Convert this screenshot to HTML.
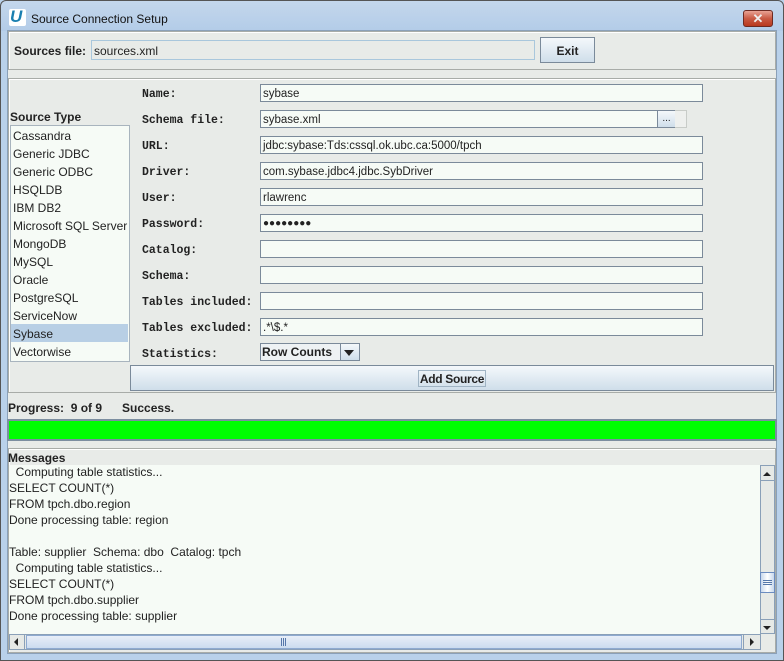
<!DOCTYPE html>
<html><head><style>
*{box-sizing:border-box;margin:0;padding:0}
body{width:784px;height:661px;overflow:hidden;background:#b9d1ea;font-family:"Liberation Sans",sans-serif;font-size:12px;color:#222;position:relative}
.a{position:absolute}
.win{left:0;top:0;width:784px;height:661px;border:1px solid #555;border-radius:6px 6px 0 0;background:linear-gradient(#c4d7ec,#b3cce8 30px,#b9d1ea 30px)}
.content{left:7px;top:30px;width:770px;height:624px;background:#e8ebe8;border:1px solid #8aa0b8}
.box{border:1px solid #a8aca8;box-shadow:inset 1px 1px 0 #fff}
.tf{background:#f6fbf6;border:1px solid #7b8a9a;height:18px;font-size:11.5px;padding-left:2px;padding-top:1px;line-height:16px;white-space:nowrap;overflow:hidden}
.lbl{font-family:"Liberation Mono",monospace;font-weight:bold;font-size:11.5px;left:142px}
.li{left:13px;font-size:12px}
.btn{border:1px solid #7a8a9a;background:linear-gradient(#f4f8fb,#cfdeea);font-weight:bold;text-align:center}
.msg{left:9px;font-size:12px}
</style></head><body>
<div class="a win"></div>
<div class="a" style="left:9px;top:9px;width:17px;height:17px;background:#fff;border-radius:2px"></div>
<div class="a" style="left:10px;top:7px;font:bold italic 17px 'Liberation Sans';color:#1a7fb0">U</div>
<div class="a" style="left:31px;top:12px;font-size:12px;color:#111">Source Connection Setup</div>
<div class="a" style="left:743px;top:10px;width:30px;height:17px;border:1px solid #6d2a22;border-radius:3px;background:linear-gradient(#e9a394,#c95a44 50%,#b8391f);color:#eee;font-weight:bold;text-align:center;line-height:15px;font-size:13px">✕</div>
<div class="a content"></div>
<div class="a box" style="left:8px;top:31px;width:768px;height:39px"></div>
<div class="a" style="left:14px;top:44px;font-weight:bold;font-size:12px">Sources file:</div>
<div class="a tf" style="left:91px;top:40px;width:444px;height:20px;border-color:#a9c7dc;line-height:18px;font-size:12px;background:#e8ebe8">sources.xml</div>
<div class="a btn" style="left:540px;top:37px;width:55px;height:26px;line-height:26px;font-size:12px">Exit</div>
<div class="a box" style="left:8px;top:78px;width:768px;height:315px"></div>
<div class="a" style="left:10px;top:110px;font-weight:bold;font-size:12px">Source Type</div>
<div class="a" style="left:10px;top:125px;width:120px;height:237px;background:#f6fbf6;border:1px solid #a8b4be"></div>
<div class="a" style="left:11px;top:324px;width:117px;height:18px;background:#b8cfe5"></div>
<div class="a li" style="top:129px">Cassandra</div>
<div class="a li" style="top:147px">Generic JDBC</div>
<div class="a li" style="top:165px">Generic ODBC</div>
<div class="a li" style="top:183px">HSQLDB</div>
<div class="a li" style="top:201px">IBM DB2</div>
<div class="a li" style="top:219px">Microsoft SQL Server</div>
<div class="a li" style="top:237px">MongoDB</div>
<div class="a li" style="top:255px">MySQL</div>
<div class="a li" style="top:273px">Oracle</div>
<div class="a li" style="top:291px">PostgreSQL</div>
<div class="a li" style="top:309px">ServiceNow</div>
<div class="a li" style="top:327px">Sybase</div>
<div class="a li" style="top:345px">Vectorwise</div>

<div class="a lbl" style="top:88px">Name:</div>
<div class="a tf" style="left:260px;top:84px;width:443px">sybase</div>
<div class="a lbl" style="top:114px">Schema file:</div>
<div class="a tf" style="left:260px;top:110px;width:398px">sybase.xml</div>
<div class="a" style="left:657px;top:110px;width:19px;height:18px;border:1px solid #7b8a9a;background:linear-gradient(#f4f8fb,#cfdeea);font-size:10px;text-align:center;line-height:16px">...</div>
<div class="a" style="left:675px;top:110px;width:12px;height:18px;border:1px solid #c8ccc8;border-left:none;background:#eef0ee"></div>
<div class="a lbl" style="top:140px">URL:</div>
<div class="a tf" style="left:260px;top:136px;width:443px">jdbc:sybase:Tds:cssql.ok.ubc.ca:5000/tpch</div>
<div class="a lbl" style="top:166px">Driver:</div>
<div class="a tf" style="left:260px;top:162px;width:443px">com.sybase.jdbc4.jdbc.SybDriver</div>
<div class="a lbl" style="top:192px">User:</div>
<div class="a tf" style="left:260px;top:188px;width:443px">rlawrenc</div>
<div class="a lbl" style="top:218px">Password:</div>
<div class="a tf" style="left:260px;top:214px;width:443px;font-size:10px">●●●●●●●●</div>
<div class="a lbl" style="top:244px">Catalog:</div>
<div class="a tf" style="left:260px;top:240px;width:443px"></div>
<div class="a lbl" style="top:270px">Schema:</div>
<div class="a tf" style="left:260px;top:266px;width:443px"></div>
<div class="a lbl" style="top:296px">Tables included:</div>
<div class="a tf" style="left:260px;top:292px;width:443px"></div>
<div class="a lbl" style="top:322px">Tables excluded:</div>
<div class="a tf" style="left:260px;top:318px;width:443px">.*\$.*</div>
<div class="a lbl" style="top:348px">Statistics:</div>
<div class="a" style="left:260px;top:343px;width:100px;height:18px;border:1px solid #7b8a9a;background:#eef2f4"></div>
<div class="a" style="left:262px;top:345px;font-weight:bold;font-size:12px">Row Counts</div>
<div class="a" style="left:340px;top:344px;width:19px;height:16px;border-left:1px solid #7b8a9a;background:linear-gradient(#f4f8fb,#cfdeea)"></div>
<div class="a" style="left:344px;top:350px;width:0;height:0;border-left:5px solid transparent;border-right:5px solid transparent;border-top:6px solid #222"></div>
<div class="a btn" style="left:130px;top:365px;width:644px;height:26px;font-weight:normal"></div>
<div class="a" style="left:418px;top:370px;width:68px;height:17px;border:1px solid #a0b4c4;font-weight:bold;font-size:12px;text-align:center;line-height:16px;white-space:nowrap;letter-spacing:-0.3px">Add Source</div>

<div class="a" style="left:8px;top:401px;font-weight:bold;font-size:12px">Progress:&nbsp; 9 of 9 &nbsp; &nbsp; &nbsp;Success.</div>
<div class="a" style="left:7px;top:419px;width:770px;height:22px;border:2px solid #7c8ea0;background:#00ff00"></div>
<div class="a box" style="left:8px;top:448px;width:768px;height:205px"></div>
<div class="a" style="left:8px;top:451px;font-weight:bold;font-size:12px">Messages</div>
<div class="a" style="left:9px;top:465px;width:752px;height:169px;background:#f6fbf6"></div>
<div class="a msg" style="top:465px">&nbsp; Computing table statistics...</div>
<div class="a msg" style="top:481px">SELECT COUNT(*)</div>
<div class="a msg" style="top:497px">FROM tpch.dbo.region</div>
<div class="a msg" style="top:513px">Done processing table: region</div>
<div class="a msg" style="top:545px">Table: supplier&nbsp; Schema: dbo&nbsp; Catalog: tpch</div>
<div class="a msg" style="top:561px">&nbsp; Computing table statistics...</div>
<div class="a msg" style="top:577px">SELECT COUNT(*)</div>
<div class="a msg" style="top:593px">FROM tpch.dbo.supplier</div>
<div class="a msg" style="top:609px">Done processing table: supplier</div>
<div class="a" style="left:760px;top:465px;width:15px;height:169px;background:#e6e9e6;border:1px solid #8aa0b8"></div>
<div class="a" style="left:761px;top:466px;width:13px;height:15px;border-bottom:1px solid #8aa0b8"></div>
<div class="a" style="left:763px;top:472px;border-left:4px solid transparent;border-right:4px solid transparent;border-bottom:4px solid #222"></div>
<div class="a" style="left:760px;top:572px;width:15px;height:21px;border:1px solid #6b8cc0;background:linear-gradient(90deg,#c8d8ec,#fff,#c8d8ec)"></div>
<div class="a" style="left:763px;top:580px;width:9px;height:5px;border-top:1px solid #5577aa;border-bottom:1px solid #5577aa"></div>
<div class="a" style="left:763px;top:582px;width:9px;height:1px;background:#5577aa"></div>
<div class="a" style="left:761px;top:619px;width:13px;height:15px;border-top:1px solid #8aa0b8"></div>
<div class="a" style="left:763px;top:626px;border-left:4px solid transparent;border-right:4px solid transparent;border-top:4px solid #222"></div>
<div class="a" style="left:9px;top:634px;width:752px;height:16px;background:#e6e9e6;border:1px solid #8aa0b8"></div>
<div class="a" style="left:10px;top:635px;width:15px;height:14px;border-right:1px solid #8aa0b8"></div>
<div class="a" style="left:14px;top:638px;border-top:4px solid transparent;border-bottom:4px solid transparent;border-right:4px solid #222"></div>
<div class="a" style="left:26px;top:635px;width:716px;height:14px;background:linear-gradient(#e8eef8,#cbdcef);border:1px solid #8eaad0"></div>
<div class="a" style="left:281px;top:638px;width:5px;height:8px;border-left:1px solid #5577aa;border-right:1px solid #5577aa"></div>
<div class="a" style="left:283px;top:638px;width:1px;height:8px;background:#5577aa"></div>
<div class="a" style="left:743px;top:635px;width:15px;height:14px;border-left:1px solid #8aa0b8"></div>
<div class="a" style="left:750px;top:638px;border-top:4px solid transparent;border-bottom:4px solid transparent;border-left:4px solid #222"></div>
</body></html>
